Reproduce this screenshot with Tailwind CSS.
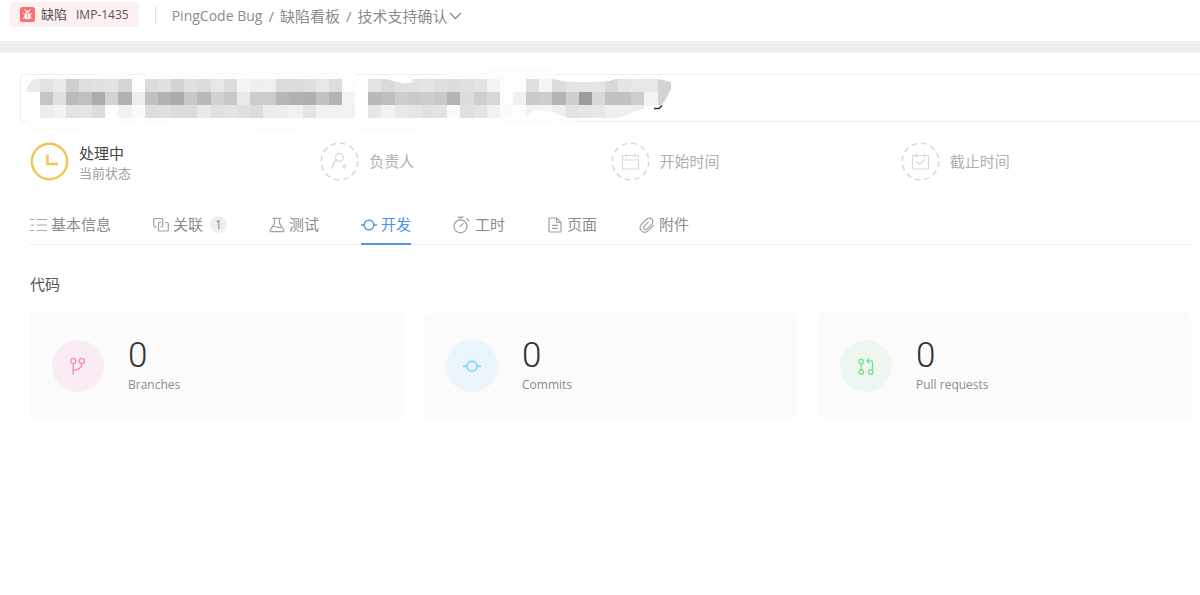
<!DOCTYPE html>
<html lang="zh-CN">
<head>
  <meta charset="UTF-8" />
  <meta name="viewport" content="width=device-width, initial-scale=1" />
  <title>IMP-1435 - PingCode Bug</title>
  <script src="https://cdn.jsdelivr.net/npm/@tailwindcss/browser@4"></script>
</head>
<body class="min-h-screen bg-white font-['Open_Sans','Noto_Sans_CJK_SC',sans-serif] text-[15px] text-[#8c8c8c]">

  <header class="flex h-[41px] items-start">
    <div class="ml-[10px] mt-[2px] flex h-[25px] items-center rounded bg-[#fdf0f0] px-[10px] text-[13px] text-[#555]">
      <svg class="mr-[6px] size-[15px]" viewBox="0 0 15 15" fill="none">
        <rect width="15" height="15" rx="2.5" fill="#f97070" />
        <path d="M4.800 2.600 6.600 4.600M10.200 2.600 8.400 4.600" stroke="#fff" stroke-width="1" stroke-linecap="round" />
        <path d="M3.200 6.400l1.600 1M11.800 6.400l-1.600 1M3 11.400l1.600-1M12 11.400l-1.600-1" stroke="#fff" stroke-width=".8" stroke-linecap="round" />
        <path d="M5.500 5.600a2 2 0 0 1 4 0z" fill="#fff" />
        <path d="M7.200 6.200v6.400C5.300 12.500 4.200 11.400 4.300 9.500c.1-1.500.8-2.600 1.400-3.300zM7.800 6.200v6.400c1.900-.1 3-1.200 2.900-3.100-.1-1.500-.8-2.600-1.400-3.300z" fill="#fff" />
      </svg>
      <span>缺陷</span>
      <span class="ml-[9px] text-xs">IMP-1435</span>
    </div>
    <div class="ml-4 mt-[6px] h-[17px] w-px bg-[#ddd]"></div>
    <nav class="ml-4 mt-1 flex h-6 items-center gap-[6px]">
      <a href="#" class="text-sm">PingCode Bug</a>
      <span>/</span>
      <a href="#">缺陷看板</a>
      <span>/</span>
      <button type="button" class="flex items-center gap-[2px]">
        技术支持确认
        <svg class="h-[8px] w-[13px]" viewBox="0 0 13 8" fill="none" stroke="#888" stroke-width="1.300">
          <path d="M1 1l5.500 5.500L12 1" />
        </svg>
      </button>
    </nav>
  </header>
  <div class="h-[12px] bg-[#ededed]"></div>

  <main class="pt-[21px]">
    <!-- Titre masqué -->
    <div class="relative ml-5">
      <input type="text" aria-label="标题" class="block h-12 w-full rounded-l border border-r-0 border-[#eee] px-[10px] text-xl text-[#333] outline-none" />
      <svg id="mosaic" class="pointer-events-none absolute -top-[9px] left-0 h-[70px] w-[690px]" viewBox="20 65 690 70">
        <path fill="#fdfdfd" d="M27 92V84l8-6 64-1v-4h28v4h17l2-5 40-2h110l60 1v8h89l2-8 48-2h60l2 6v4h63v-4l28 1v5l42 2-4 8-20 6-14 12h-21l-1 8-26-2h-21v6l-60 3-76 5-120 6-70-4-90-6-45-4v4l-40 6-42 2-12-4z" />
        <g id="cells"></g>
        <path fill="#fff" d="M385 79l19 4.500 8-1 1-3.500zM553 79l12 2.500 22 .8 22-1.300 6-2zM526 119l7.500-9 20 2 16.500 7zM618 119l15-7 20-7 14-1v15z" />
        <path fill="#d3d3d3" d="M658 79l13 3v7l-4 8-5 8h-4z" />
        <path fill="none" stroke="#333" stroke-width="1.600" d="M654 108.500h5l3-3" />
      </svg>
    </div>

    <div class="pl-[30px] pr-[9px]">
      <div class="mt-[19px] grid grid-cols-4 text-[#b0b0b0]">
        <div class="flex items-center gap-[10px]">
          <svg class="size-[39px]" viewBox="0 0 39 39" fill="none" stroke="#f3c24f">
            <circle cx="19.500" cy="19.500" r="17.700" stroke-width="2.400" />
            <path d="M17.500 12.500v9.500H28" stroke-width="2.400" />
          </svg>
          <div>
            <div class="leading-6 text-[#444]">处理中</div>
            <div class="text-[13px] leading-4 text-[#a0a0a0]">当前状态</div>
          </div>
        </div>
        <div class="flex items-center gap-[10px]">
          <svg class="size-[39px]" viewBox="0 0 39 39" fill="none" stroke="#dadada">
            <circle cx="19.500" cy="19.500" r="18.300" stroke-width="1.600" stroke-dasharray="5.600 3.980" />
            <g stroke-width="1.400">
              <circle cx="19.500" cy="15.500" r="4" />
              <path d="M16.500 18.200c-2.500 1.600-4 4.300-4.200 8.300M24.300 22v5M21.800 24.500h5" />
            </g>
          </svg>
          <span>负责人</span>
        </div>
        <div class="flex items-center gap-[10px]">
          <svg class="size-[39px]" viewBox="0 0 39 39" fill="none" stroke="#dadada">
            <circle cx="19.500" cy="19.500" r="18.300" stroke-width="1.600" stroke-dasharray="5.600 3.980" />
            <path d="M11.500 13.500h16v13.500h-16zM11.500 18h16M15.500 11.500v4M23.500 11.500v4" stroke-width="1.200" />
          </svg>
          <span>开始时间</span>
        </div>
        <div class="flex items-center gap-[10px]">
          <svg class="size-[39px]" viewBox="0 0 39 39" fill="none" stroke="#dadada">
            <circle cx="19.500" cy="19.500" r="18.300" stroke-width="1.600" stroke-dasharray="5.600 3.980" />
            <path d="M11.500 13.500h16v13.500h-16zM15.500 11.500v4M23.500 11.500v4M15.500 19.500l3 3 5.500-5" stroke-width="1.200" />
          </svg>
          <span>截止时间</span>
        </div>
      </div>

      <nav class="mt-[25px] flex h-[39px] gap-[42px] border-b border-[#eee]">
        <a href="#" class="-mb-px flex items-center gap-1 border-b-2 border-transparent">
          <svg class="h-4 w-[17px]" viewBox="0 0 17 16" fill="none" stroke="#aaa" stroke-width="1.200">
            <path d="M0 2.500h4M6.500 2.500H17M1 8h3M6.500 8H17M0 13.500h4M6.500 13.500H17" />
          </svg>
          基本信息
        </a>
        <a href="#" class="-mb-px flex items-center gap-1 border-b-2 border-transparent">
          <svg class="size-4" viewBox="0 0 16 16" fill="none" stroke="#a0a0a0" stroke-width="1.200">
            <path d="M3.800 9.800H1.700a1 1 0 0 1-1-1V2.500a1 1 0 0 1 1-1h7a1 1 0 0 1 1 1v6.300a1 1 0 0 1-1 1H7.500" />
            <path d="M12 5.500h2.300a1 1 0 0 1 1 1v6.500a1 1 0 0 1-1 1H6.500a1 1 0 0 1-1-1V6.500a1 1 0 0 1 1-1H8" />
          </svg>
          关联
          <span class="ml-[3px] flex size-[17px] items-center justify-center rounded-full bg-[#eee] text-xs">1</span>
        </a>
        <a href="#" class="-mb-px flex items-center gap-1 border-b-2 border-transparent">
          <svg class="size-4" viewBox="0 0 16 16" fill="none" stroke="#a0a0a0" stroke-width="1.200">
            <path d="M3.500 1.300h9M5.500 1.300v5L1.300 13c-.4.900 0 1.700.9 1.700h11.600c.9 0 1.300-.8.9-1.700L10.500 6.300v-5M3.300 10c2-1 3.300-.5 4.700 0s3 .8 4.700 0" />
          </svg>
          测试
        </a>
        <a href="#" class="-mb-px flex items-center gap-1 border-b-2 border-[#5097ee] text-[#4a92e8]">
          <svg class="size-4" viewBox="0 0 16 16" fill="none" stroke="#5097ee" stroke-width="1.400">
            <circle cx="8" cy="8" r="4.800" />
            <path d="M0 8h3.200M12.800 8H16" />
          </svg>
          开发
        </a>
        <a href="#" class="-mb-px flex items-center gap-1 border-b-2 border-transparent">
          <svg class="size-[18px]" viewBox="0 0 18 18" fill="none" stroke="#a0a0a0" stroke-width="1.200">
            <circle cx="7.500" cy="10.300" r="6.500" />
            <path d="M4.500 1.200h6M7.500 1.200v2.600M13 2.700c1.500.4 2.500 1.400 2.900 3M6.800 11l3.700-3.700" />
          </svg>
          工时
        </a>
        <a href="#" class="-mb-px flex items-center gap-1 border-b-2 border-transparent">
          <svg class="size-4" viewBox="0 0 16 16" fill="none" stroke="#a0a0a0" stroke-width="1.200">
            <path d="M9.500 1H2.700a.7.700 0 0 0-.7.700v12.600c0 .4.300.7.700.7h10.600c.4 0 .7-.3.700-.7V5.500zM9.500 1v4.500H14M5 8.300h6M5 11.300h6" />
          </svg>
          页面
        </a>
        <a href="#" class="-mb-px flex items-center gap-1 border-b-2 border-transparent">
          <svg class="size-4" viewBox="0 0 16 16" fill="none" stroke="#a0a0a0" stroke-width="1.200">
            <path d="M14.700 8.200 9.500 13.400c-2 2-4.900 2.200-6.900.5-2-2-1.900-4.800.1-6.800l4.600-4.600c1.600-1.600 4-1.700 5.500-.3s1.400 3.700-.1 5.200l-4.500 4.500c-1 1-2.300 1-3.100.2s-.8-2 .1-3l4.500-4.500" />
          </svg>
          附件
        </a>
      </nav>

      <h2 class="mt-[27px] leading-6 text-[#555]">代码</h2>

      <div class="mt-[17px] grid grid-cols-3 gap-[21px]">
        <div class="flex items-center gap-6 rounded bg-[#fbfbfb] px-[22px] py-[23px]">
          <div class="flex size-[52px] items-center justify-center rounded-full bg-[#faecf4]">
            <svg class="size-[18px]" viewBox="0 0 18 18" fill="none" stroke="#f48cc3" stroke-width="1.400">
              <circle cx="4.200" cy="4" r="2.600" />
              <circle cx="12.800" cy="4" r="2.600" />
              <path d="M4.200 6.600v11M12.800 6.600c0 4-3.400 6.400-8.600 6.800" />
            </svg>
          </div>
          <div>
            <div class="font-[Roboto] text-[35px] font-light leading-[39px] text-[#333]">0</div>
            <div class="text-xs leading-5">Branches</div>
          </div>
        </div>
        <div class="flex items-center gap-6 rounded bg-[#fbfbfb] px-[22px] py-[23px]">
          <div class="flex size-[52px] items-center justify-center rounded-full bg-[#e9f5fb]">
            <svg class="size-[18px]" viewBox="0 0 18 18" fill="none" stroke="#78d3fb" stroke-width="1.400">
              <circle cx="9" cy="9.300" r="5" />
              <path d="M0 9.300h4M14 9.300h4" />
            </svg>
          </div>
          <div>
            <div class="font-[Roboto] text-[35px] font-light leading-[39px] text-[#333]">0</div>
            <div class="text-xs leading-5">Commits</div>
          </div>
        </div>
        <div class="flex items-center gap-6 rounded bg-[#fbfbfb] px-[22px] py-[23px]">
          <div class="flex size-[52px] items-center justify-center rounded-full bg-[#edf7f0]">
            <svg class="size-[18px]" viewBox="0 0 18 18" fill="none" stroke="#84dd9b" stroke-width="1.400">
              <circle cx="4.300" cy="4.500" r="2.200" />
              <circle cx="4.300" cy="15" r="2.200" />
              <circle cx="13.800" cy="15" r="2.200" />
              <path d="M4.300 6.700v6.100M15.500 13.500V5.200c0-.8-.4-1.200-1.200-1.200H10M12.300 1.600 9.900 4l2.400 2.400" />
            </svg>
          </div>
          <div>
            <div class="font-[Roboto] text-[35px] font-light leading-[39px] text-[#333]">0</div>
            <div class="text-xs leading-5">Pull requests</div>
          </div>
        </div>
      </div>
    </div>
  </main>

  <script>
    // niveaux de gris de la mosaïque, une ligne par rangée
    const rows = [
      "eb e3 ea cf df e1 e3 d5 fd dc e0 d3 e0 dc e7 dd f5 ef f0 dc dc df e7 dd fd ff e4 da e0 e2 e5 df dd e0 e4 f3 fd fd df f5 dc e4 e5 e5 d8 e5 e7 e7",
      "ff c5 e0 bb c0 ac d3 b2 ed c1 b2 ab c8 b9 d1 c8 e9 cd cc b7 b1 af c2 b3 f3 ff b9 be cd ca cd c9 b4 dc cf d7 fd f1 ca cd b4 cf 9d d8 c2 c2 ce f3",
      "ff ed f3 e2 e5 dc fd f2 fa dd e0 dc dc e9 e0 e4 e0 dc ec ed f2 e4 f1 f2 f2 ff e7 f2 e8 e7 e1 e3 fa e0 e4 f1 fa fd f3 f5 ee e2 e5 e7 ee ef ec f6"
    ];
    const cells = document.getElementById("cells");
    const size = 13.15;
    rows.forEach((row, r) => {
      row.split(" ").forEach((g, c) => {
        const el = document.createElementNS("http://www.w3.org/2000/svg", "path");
        const x = 26.4 + c * size;
        const y = 79 + r * size;
        // premier carreau arrondi en haut à gauche
        el.setAttribute("d", r === 0 && c === 0
          ? `M${x} ${y + size}q1 -${size} ${size} -${size}v${size}z`
          : `M${x} ${y}h${size}v${size}h-${size}z`);
        el.setAttribute("fill", `#${g}${g}${g}`);
        el.setAttribute("shape-rendering", "crispEdges");
        cells.appendChild(el);
      });
    });
  </script>

</body>
</html>
